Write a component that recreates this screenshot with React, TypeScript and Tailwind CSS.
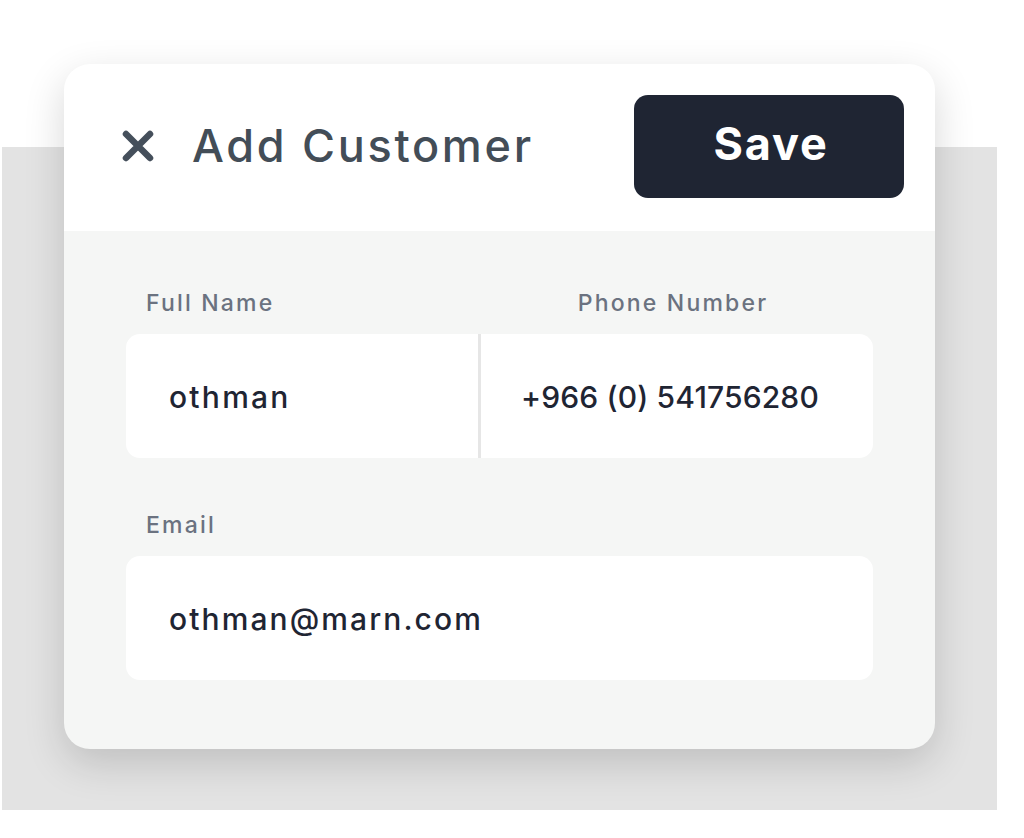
const font = { fontFamily: 'Inter, "Noto Sans", sans-serif' };

function CloseIcon() {
    return (
        <svg width="32" height="32" viewBox="0 0 32 32" fill="none" className="text-[#454f5b]">
            <path d="M4 4 L28 28 M28 4 L4 28" stroke="currentColor" strokeWidth="6.5" strokeLinecap="round" />
        </svg>
    );
}

export default function App() {
    return (
        <div className="min-h-screen bg-white" style={font}>
            <div className="relative h-[838px] pt-[64px]">
                {/* grey backdrop behind the dialog */}
                <div className="absolute left-[2px] top-[147px] w-[995px] h-[663px] bg-[#e3e3e3]" />

                <div className="relative ml-[64px] w-[871px] h-[685px] rounded-[26px] overflow-hidden bg-[#f5f6f5] shadow-[0_14px_40px_rgba(0,0,0,0.16)]">
                    <div className="h-[167px] bg-white flex items-center justify-between pl-[58px] pr-[31px]">
                        <div className="flex items-center gap-[38px] -mt-[4px]">
                            <CloseIcon />
                            <h1 className="text-[45px] font-medium text-[#434d57] leading-none tracking-[0.06em]">Add Customer</h1>
                        </div>
                        <button className="w-[270px] h-[103px] -mt-[3px] rounded-[14px] bg-[#1f2533] text-white text-[45px] font-bold tracking-[0.04em] pb-[4px] pl-[4px]">
                            Save
                        </button>
                    </div>

                    <div className="px-[62px] pt-[61px]">
                        <div className="flex flex-col">
                            <div className="flex text-[23px] font-medium text-[#6b7280] leading-none tracking-[0.095em]">
                                <span className="w-[355px] pl-[20px]">Full Name</span>
                                <span className="flex-1 text-center pr-[8px]">Phone Number</span>
                            </div>
                            <div className="mt-[19px] h-[124px] rounded-[14px] bg-white flex">
                                <div className="w-[355px] flex items-center pl-[43px] pt-[3px] border-r-[3px] border-[#e6e6e6]">
                                    <span className="text-[30px] font-medium text-[#1f2533] tracking-[0.075em]">othman</span>
                                </div>
                                <div className="flex-1 flex items-center justify-center pr-[14px] pt-[3px]">
                                    <span className="text-[30px] font-medium text-[#1f2533] tracking-[0.005em]">+966 (0) 541756280</span>
                                </div>
                            </div>
                        </div>

                        <div className="mt-[56px] flex flex-col">
                            <span className="pl-[20px] text-[23px] font-medium text-[#6b7280] leading-none tracking-[0.095em]">Email</span>
                            <div className="mt-[19px] h-[124px] rounded-[14px] bg-white flex items-center px-[43px] pt-[3px]">
                                <span className="text-[30px] font-medium text-[#1f2533] tracking-[0.07em]">othman@marn.com</span>
                            </div>
                        </div>
                    </div>
                </div>
            </div>
        </div>
    );
}
